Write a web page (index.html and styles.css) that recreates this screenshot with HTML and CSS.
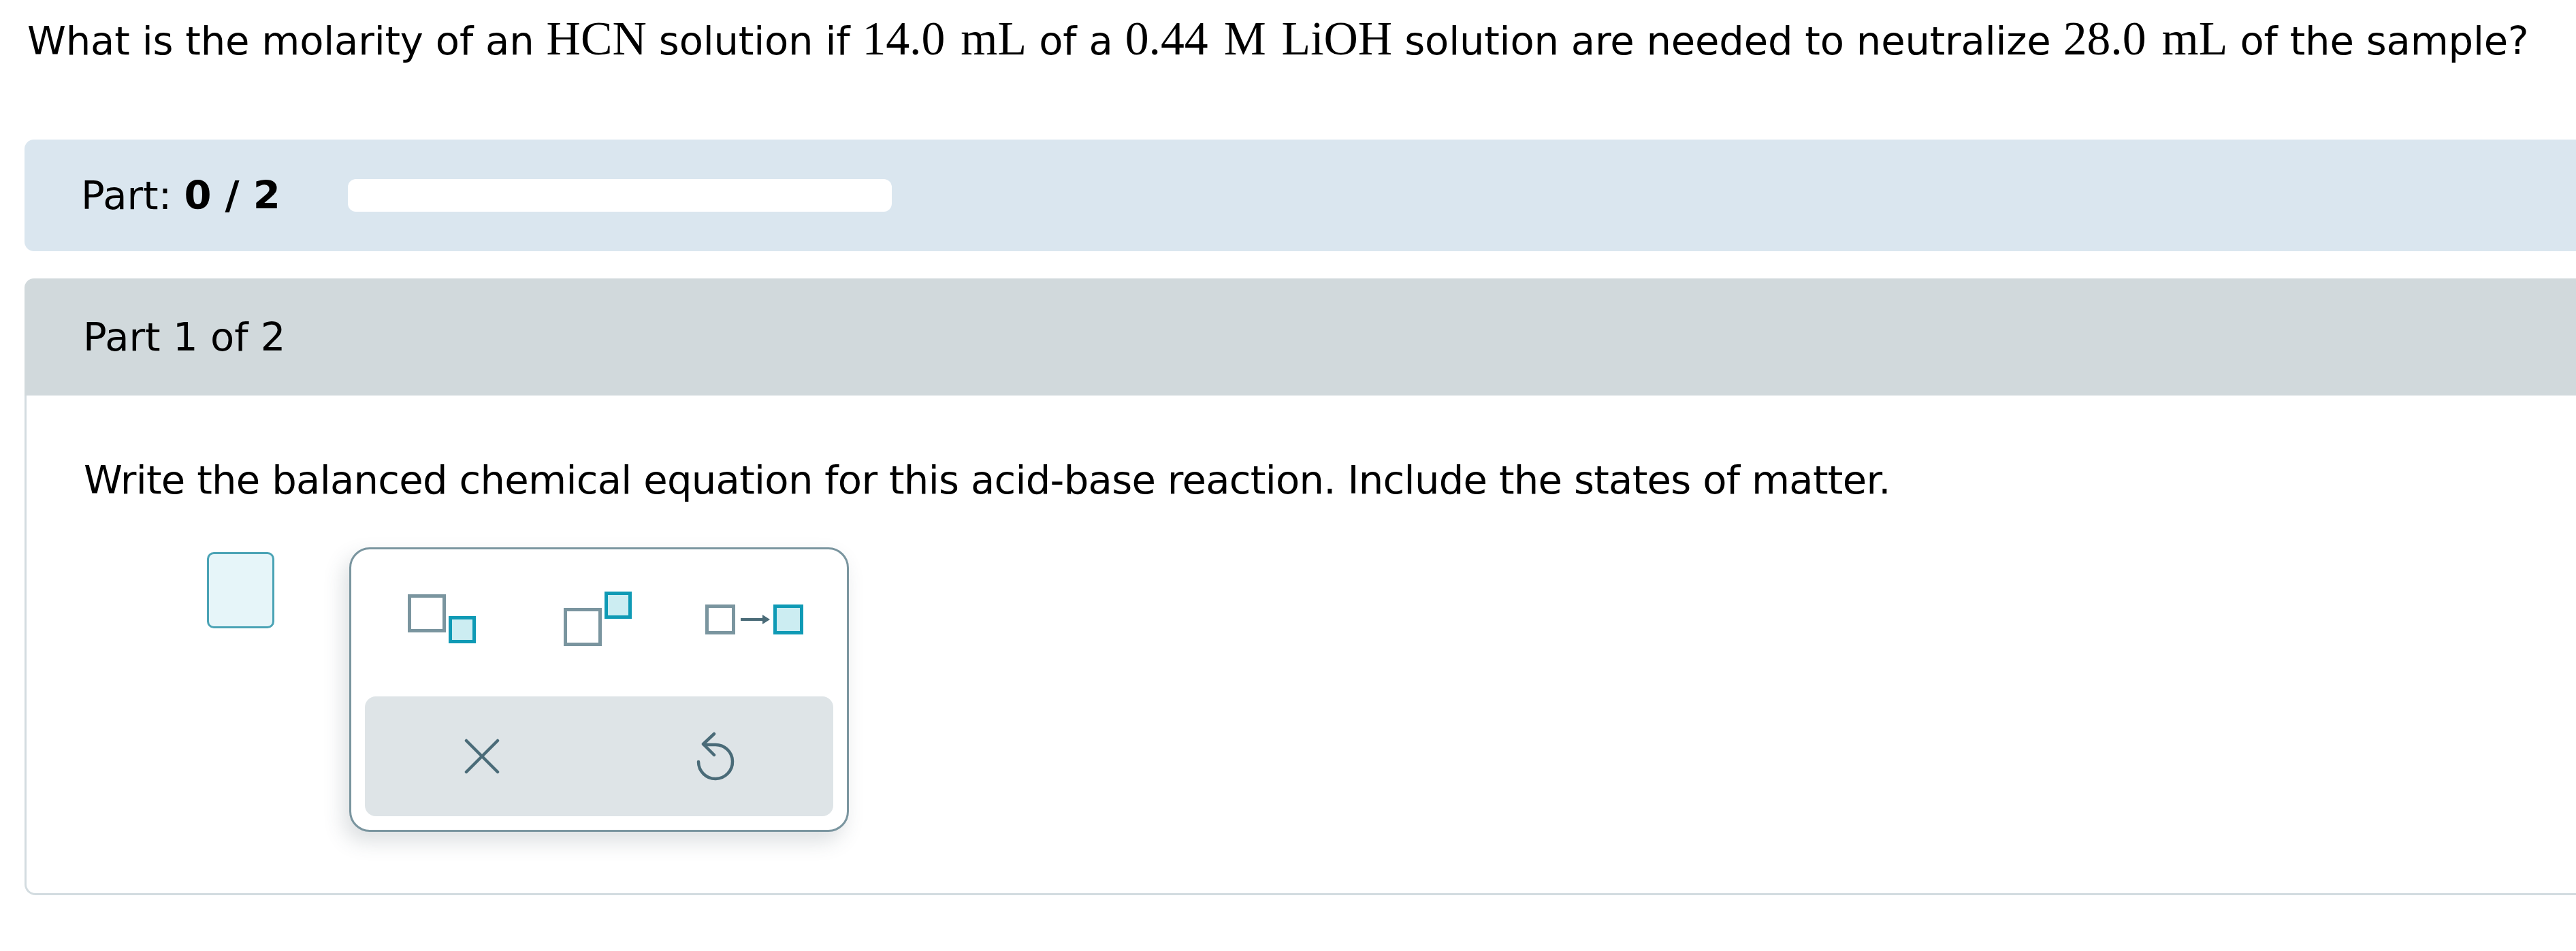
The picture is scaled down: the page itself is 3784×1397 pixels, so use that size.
FILE: index.html
```html
<!DOCTYPE html>
<html lang="en">
<head>
<meta charset="utf-8">
<title>Molarity question</title>
<link rel="stylesheet" href="styles.css">
</head>
<body>
<div class="page">
  <p class="question">What is the molarity of an <span class="math">HCN</span> solution if <span class="math">14.0<span class="sp"></span>mL</span> of a <span class="math">0.44<span class="sp"></span>M<span class="sp"></span>LiOH</span> solution are needed to neutralize <span class="math">28.0<span class="sp"></span>mL</span> of the sample?</p>

  <div class="progress">
    <span class="progress-label">Part: <b>0 / 2</b></span>
    <span class="progress-bar"></span>
  </div>

  <div class="part">
    <div class="part-head">Part 1 of 2</div>
    <div class="part-body">
      <p class="prompt">Write the balanced chemical equation for this acid-base reaction. Include the states of matter.</p>
      <div class="answer">
        <span class="answer-box"></span>
        <div class="palette">
          <div class="palette-icons">
            <button class="tool" aria-label="subscript">
              <svg width="104" height="76" viewBox="0 0 104 76">
                <rect x="2.5" y="2.5" width="51" height="51" fill="#fff" stroke="#7a959f" stroke-width="5"/>
                <rect x="62.5" y="34.5" width="35" height="35" fill="#ccedf2" stroke="#0f9ab5" stroke-width="5"/>
              </svg>
            </button>
            <button class="tool" aria-label="superscript">
              <svg width="104" height="84" viewBox="0 0 104 84">
                <rect x="2.5" y="26.5" width="51" height="51" fill="#fff" stroke="#7a959f" stroke-width="5"/>
                <rect x="62.5" y="2.5" width="35" height="35" fill="#ccedf2" stroke="#0f9ab5" stroke-width="5"/>
              </svg>
            </button>
            <button class="tool" aria-label="reaction arrow">
              <svg width="146" height="46" viewBox="0 0 146 46">
                <rect x="2.5" y="2.5" width="39" height="39" fill="#fff" stroke="#7a959f" stroke-width="5"/>
                <line x1="52" y1="22" x2="86" y2="22" stroke="#4a6b78" stroke-width="4"/>
                <polygon points="84,15 95,22 84,29" fill="#4a6b78"/>
                <rect x="102.5" y="2.5" width="39" height="39" fill="#ccedf2" stroke="#0f9ab5" stroke-width="5"/>
              </svg>
            </button>
          </div>
          <div class="palette-actions">
            <button class="tool" aria-label="clear">
              <svg width="52" height="52" viewBox="0 0 52 52">
                <path d="M3 3 L49 49 M49 3 L3 49" stroke="#4a6b78" stroke-width="4.5" stroke-linecap="round" fill="none"/>
              </svg>
            </button>
            <button class="tool" aria-label="undo">
              <svg width="60" height="72" viewBox="0 0 60 72">
                <path d="M4 44 A 25 25 0 1 0 28 19 L 12 19" stroke="#4a6b78" stroke-width="4.5" stroke-linecap="round" fill="none"/>
                <path d="M27 3 L 11 18 L 27 34" stroke="#4a6b78" stroke-width="4.5" stroke-linecap="round" stroke-linejoin="round" fill="none"/>
              </svg>
            </button>
          </div>
        </div>
      </div>
    </div>
  </div>
</div>
</body>
</html>
```

FILE: styles.css
```css
html, body {
  margin: 0;
  padding: 0;
  background: #ffffff;
  overflow: hidden;
}

.page {
  font-family: "DejaVu Sans", Verdana, sans-serif;
  font-size: 57.6px;
  color: #000;
  width: 3784px;
  height: 1397px;
  overflow: hidden;
}

.question {
  margin: 0;
  padding: 22px 0 0 40px;
  line-height: 70px;
  white-space: nowrap;
  letter-spacing: -0.2px;
}

.math {
  font-family: "Liberation Serif", "Times New Roman", serif;
  font-size: 69.7px;
  letter-spacing: 0;
}

.sp {
  display: inline-block;
  width: 0.33em;
}

.progress {
  margin: 109px -60px 0 36px;
  height: 164px;
  background: #dae6ef;
  border-radius: 14px 0 0 14px;
  display: flex;
  align-items: center;
  padding-left: 83px;
}

.progress-label b {
  font-weight: bold;
}

.progress-bar {
  margin-left: 99px;
  width: 799px;
  height: 48px;
  background: #ffffff;
  border-radius: 12px;
}

.part {
  margin: 40px -60px 0 36px;
}

.part-head {
  height: 172px;
  background: #d1d9dc;
  border-radius: 14px 0 0 0;
  display: flex;
  align-items: center;
  padding-left: 86px;
}

.part-body {
  height: 734px;
  border-left: 3px solid #d3dce0;
  border-bottom: 3px solid #d3dce0;
  border-radius: 0 0 0 16px;
  box-sizing: border-box;
}

.prompt {
  margin: 0;
  padding: 90px 0 0 84px;
  line-height: 70px;
  letter-spacing: -0.7px;
}

.answer {
  display: flex;
  align-items: flex-start;
  margin-top: 63px;
  padding-left: 265px;
}

.answer-box {
  box-sizing: border-box;
  width: 99px;
  height: 112px;
  margin-top: 7px;
  border: 3px solid #4aa3b5;
  border-radius: 10px;
  background: #e6f5f9;
}

.palette {
  margin-left: 110px;
  box-sizing: border-box;
  width: 734px;
  height: 418px;
  border: 3px solid #7a959f;
  border-radius: 30px;
  background: #fff;
  box-shadow: -8px 14px 30px rgba(60, 80, 90, 0.18);
  padding: 20px;
  display: flex;
  flex-direction: column;
}

.tool {
  border: 0;
  background: transparent;
  padding: 0;
  margin: 0;
  display: flex;
  align-items: center;
  justify-content: center;
}

.palette-icons {
  display: grid;
  grid-template-columns: repeat(3, 1fr);
  height: 168px;
}

.palette-actions {
  margin-top: 28px;
  display: grid;
  grid-template-columns: repeat(2, 1fr);
  height: 176px;
  background: #dee4e7;
  border-radius: 16px;
}
```
